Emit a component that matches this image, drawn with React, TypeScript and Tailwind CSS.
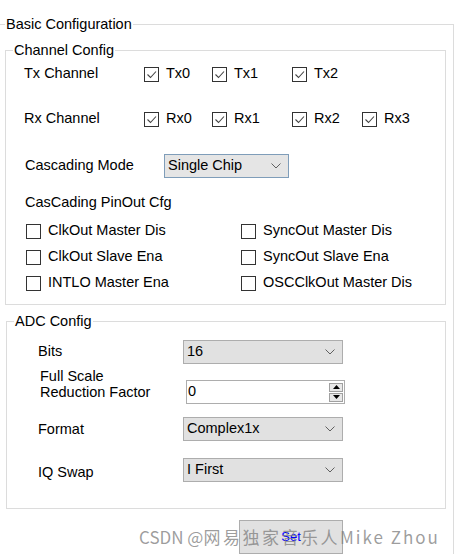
import type { ReactNode } from 'react'

function GroupBox({ title, className, legendClass, children }: { title: string; className: string; legendClass: string; children: ReactNode }) {
    return (
        <fieldset className={`border border-[#dcdcdc] p-0 ${className}`}>
            <legend className={`px-px leading-[17px] ${legendClass}`}>{title}</legend>
            {children}
        </fieldset>
    )
}

function CheckBox({ checked, label, className = '' }: { checked?: boolean; label: string; className?: string }) {
    return (
        <div className={`flex items-center ${className}`}>
            <div className="w-[15px] h-[15px] border border-[#333333] bg-white shrink-0">
                {checked && (
                    <svg width="13" height="13" viewBox="0 0 13 13">
                        <polyline points="2.5,6.5 5.5,9.5 11,3.5" fill="none" stroke="#444444" strokeWidth="1.1" />
                    </svg>
                )}
            </div>
            <span className="ml-[7px] whitespace-nowrap">{label}</span>
        </div>
    )
}

function Chevron() {
    return (
        <svg width="10" height="6" viewBox="0 0 10 6" className="shrink-0">
            <polyline points="0.5,0.5 5,5 9.5,0.5" fill="none" stroke="#606060" strokeWidth="1" />
        </svg>
    )
}

function ComboBox({ value, className }: { value: string; className: string }) {
    return (
        <div className={`h-[24px] flex items-center justify-between pl-[3px] pr-[7px] border ${className}`}>
            <span>{value}</span>
            <Chevron />
        </div>
    )
}

export default function App() {
    return (
        <div className="relative w-[457px] h-[554px] overflow-hidden bg-white text-black text-[14.5px] font-['Liberation_Sans',Arial,sans-serif]">
            {/* Basic Configuration */}
            <GroupBox title="Basic Configuration" className="mt-[16px] w-[454px] h-[600px] border-l-0 border-b-0" legendClass="ml-[5px]">
                {/* Channel Config */}
                <GroupBox title="Channel Config" className="mt-[9px] ml-[5px] w-[441px] pb-[8px]" legendClass="ml-[7px]">
                    <div className="flex items-center h-[30px] pl-[18px]">
                        <span className="w-[120px]">Tx Channel</span>
                        <CheckBox checked label="Tx0" className="w-[68px]" />
                        <CheckBox checked label="Tx1" className="w-[80px]" />
                        <CheckBox checked label="Tx2" className="w-[70px]" />
                    </div>
                    <div className="flex items-center h-[30px] mt-[15px] pl-[18px]">
                        <span className="w-[120px]">Rx Channel</span>
                        <CheckBox checked label="Rx0" className="w-[68px]" />
                        <CheckBox checked label="Rx1" className="w-[80px]" />
                        <CheckBox checked label="Rx2" className="w-[70px]" />
                        <CheckBox checked label="Rx3" />
                    </div>
                    <div className="flex items-center h-[24px] mt-[20px] pl-[19px]">
                        <span className="w-[139px]">Cascading Mode</span>
                        <ComboBox value="Single Chip" className="w-[125px] bg-[#e5e5e5] border-[#7f9db9]" />
                    </div>
                    <div className="flex items-center h-[20px] mt-[15px] pl-[19px]">CasCading PinOut Cfg</div>
                    <div className="grid grid-cols-[215px_auto] auto-rows-[26px] mt-[5px] pl-[20px]">
                        <CheckBox label="ClkOut Master Dis" />
                        <CheckBox label="SyncOut Master Dis" />
                        <CheckBox label="ClkOut Slave Ena" />
                        <CheckBox label="SyncOut Slave Ena" />
                        <CheckBox label="INTLO Master Ena" />
                        <CheckBox label="OSCClkOut Master Dis" />
                    </div>
                </GroupBox>

                {/* ADC Config */}
                <GroupBox title="ADC Config" className="mt-[8px] ml-[6px] w-[440px] pb-[26px]" legendClass="ml-[7px]">
                    <div className="flex items-center h-[24px] mt-[10px] pl-[31px]">
                        <span className="w-[145px]">Bits</span>
                        <ComboBox value="16" className="w-[160px] bg-[#e1e1e1] border-[#adadad]" />
                    </div>
                    <div className="flex items-start mt-[4px] pl-[33px]">
                        <span className="w-[146px] leading-[16px]">
                            Full Scale
                            <br />
                            Reduction Factor
                        </span>
                        <div className="mt-[12px] w-[159px] h-[24px] border border-[#adadad] bg-white flex items-center justify-between pl-[1px] pr-[1px]">
                            <span>0</span>
                            <div className="flex flex-col gap-px">
                                <div className="w-[14px] h-[9px] border border-[#a0a0a0] bg-[#e8e8e8] flex items-center justify-center">
                                    <svg width="7" height="4" viewBox="0 0 7 4">
                                        <polygon points="0,4 3.5,0 7,4" fill="#000000" />
                                    </svg>
                                </div>
                                <div className="w-[14px] h-[9px] border border-[#a0a0a0] bg-[#e8e8e8] flex items-center justify-center">
                                    <svg width="7" height="4" viewBox="0 0 7 4">
                                        <polygon points="0,0 7,0 3.5,4" fill="#000000" />
                                    </svg>
                                </div>
                            </div>
                        </div>
                    </div>
                    <div className="flex items-center h-[24px] mt-[13px] pl-[31px]">
                        <span className="w-[145px] mt-[2px]">Format</span>
                        <ComboBox value="Complex1x" className="w-[160px] bg-[#e1e1e1] border-[#adadad]" />
                    </div>
                    <div className="flex items-center h-[24px] mt-[17px] pl-[31px]">
                        <span className="w-[145px] mt-[5px]">IQ Swap</span>
                        <ComboBox value="I First" className="w-[160px] bg-[#e1e1e1] border-[#adadad]" />
                    </div>
                </GroupBox>

                <button className="mt-[11px] ml-[239px] w-[104px] h-[34px] border border-[#adadad] bg-[#e1e1e1] text-[#0000ff] text-[13px] flex items-center justify-center">
                    Set
                </button>
            </GroupBox>

            {/* watermark */}
            <div className="absolute left-[139px] top-[526px] leading-[22px] text-[17px] text-[rgba(125,125,125,0.75)] whitespace-pre font-['Noto_Sans_CJK_SC','Liberation_Sans',sans-serif]">
                <span>CSDN @</span>
                <span className="tracking-[2.5px]">网易独家音乐人</span>
                <span className="tracking-[2px]">Mike Zhou</span>
            </div>
        </div>
    )
}
